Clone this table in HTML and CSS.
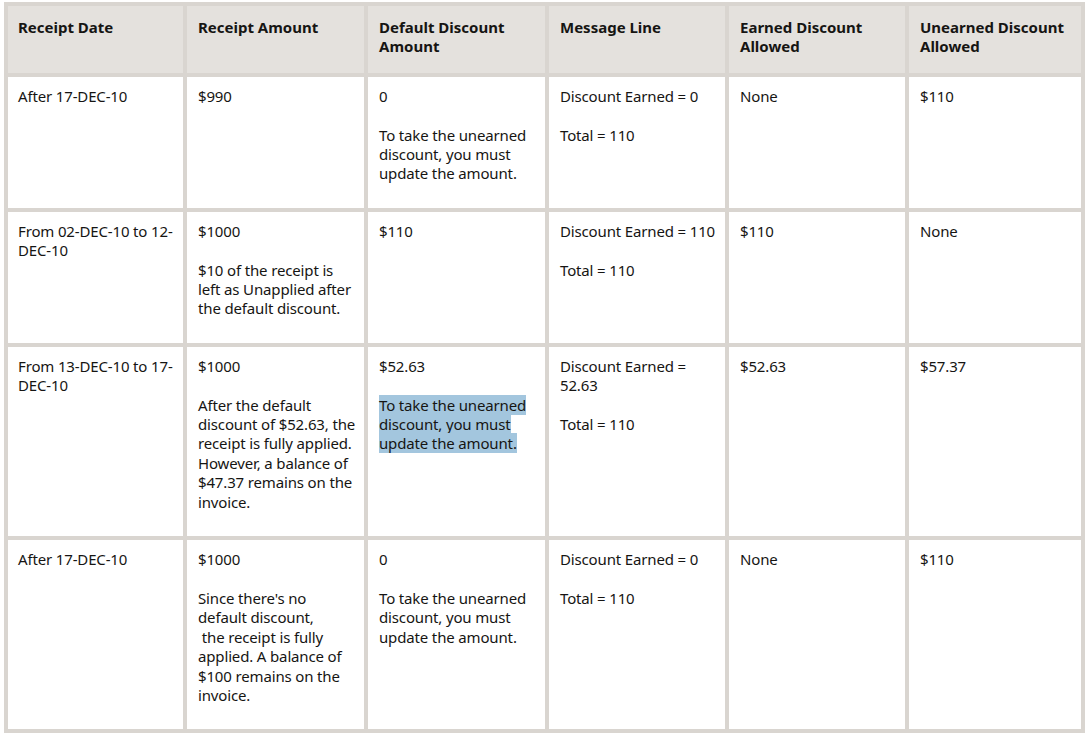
FILE: index.html
```html
<!DOCTYPE html>
<html lang="en">
<head>
<meta charset="utf-8">
<title>Receipt discounts</title>
<link rel="stylesheet" href="styles.css">
</head>
<body>
<table class="grid">
  <thead>
    <tr>
      <th class="c1">Receipt Date</th>
      <th class="c2">Receipt Amount</th>
      <th class="c3">Default Discount Amount</th>
      <th class="c4">Message Line</th>
      <th class="c5">Earned Discount Allowed</th>
      <th class="c6">Unearned Discount Allowed</th>
    </tr>
  </thead>
  <tbody>
    <tr>
      <td><p>After 17-DEC-10</p></td>
      <td><p>$990</p></td>
      <td><p>0</p><p>To take the unearned discount, you must update the amount.</p></td>
      <td><p>Discount Earned = 0</p><p>Total = 110</p></td>
      <td><p>None</p></td>
      <td><p>$110</p></td>
    </tr>
    <tr>
      <td><p>From 02-DEC-10 to 12-DEC-10</p></td>
      <td><p>$1000</p><p>$10 of the receipt is left as Unapplied after the default discount.</p></td>
      <td><p>$110</p></td>
      <td><p>Discount Earned = 110</p><p>Total = 110</p></td>
      <td><p>$110</p></td>
      <td><p>None</p></td>
    </tr>
    <tr>
      <td><p>From 13-DEC-10 to 17-DEC-10</p></td>
      <td><p>$1000</p><p>After the default discount of $52.63, the receipt is fully applied. However, a balance of $47.37 remains on the invoice.</p></td>
      <td><p>$52.63</p><p><span class="sel">To take the unearned discount, you must update the amount.</span></p></td>
      <td><p>Discount Earned = 52.63</p><p>Total = 110</p></td>
      <td><p>$52.63</p></td>
      <td><p>$57.37</p></td>
    </tr>
    <tr>
      <td><p>After 17-DEC-10</p></td>
      <td><p>$1000</p><p>Since there's no default discount,<br>&nbsp;the receipt is fully applied. A balance of $100 remains on the invoice.</p></td>
      <td><p>0</p><p>To take the unearned discount, you must update the amount.</p></td>
      <td><p>Discount Earned = 0</p><p>Total = 110</p></td>
      <td><p>None</p></td>
      <td><p>$110</p></td>
    </tr>
  </tbody>
</table>
</body>
</html>
```
FILE: styles.css
```css
html, body {
  margin: 0;
  padding: 0;
  background: #ffffff;
}
body {
  padding: 2px 0 0 4px;
  font-family: "Noto Sans", "Open Sans", "Liberation Sans", sans-serif;
  font-size: 15px;
  line-height: 19.4px;
  color: #161513;
}
.grid {
  width: 1081px;
  table-layout: fixed;
  border-collapse: separate;
  border-spacing: 0;
  border: 2px solid #d9d5d0;
}
.grid th,
.grid td {
  box-sizing: border-box;
  border: 2px solid #d9d5d0;
  vertical-align: top;
  text-align: left;
  padding: 10px 2px 24px 11px;
}
.grid td {
  letter-spacing: -0.15px;
}
.grid td:nth-child(2) {
  padding-right: 7px;
}
.grid th {
  background: #e4e1dd;
  font-weight: bold;
  padding: 12px 4px 16px 11px;
}
.grid .c1 { width: 179px; padding-left: 10px; }
.grid td:first-child { padding-left: 10px; }
.grid .c2 { width: 181px; }
.grid .c3 { width: 181px; }
.grid .c4 { width: 180px; }
.grid .c5 { width: 180px; }
.grid .c6 { width: 176px; }
.grid p {
  margin: 0;
}
.grid p + p {
  margin-top: 19.4px;
}
.sel {
  background: #a3c6de;
}
```
